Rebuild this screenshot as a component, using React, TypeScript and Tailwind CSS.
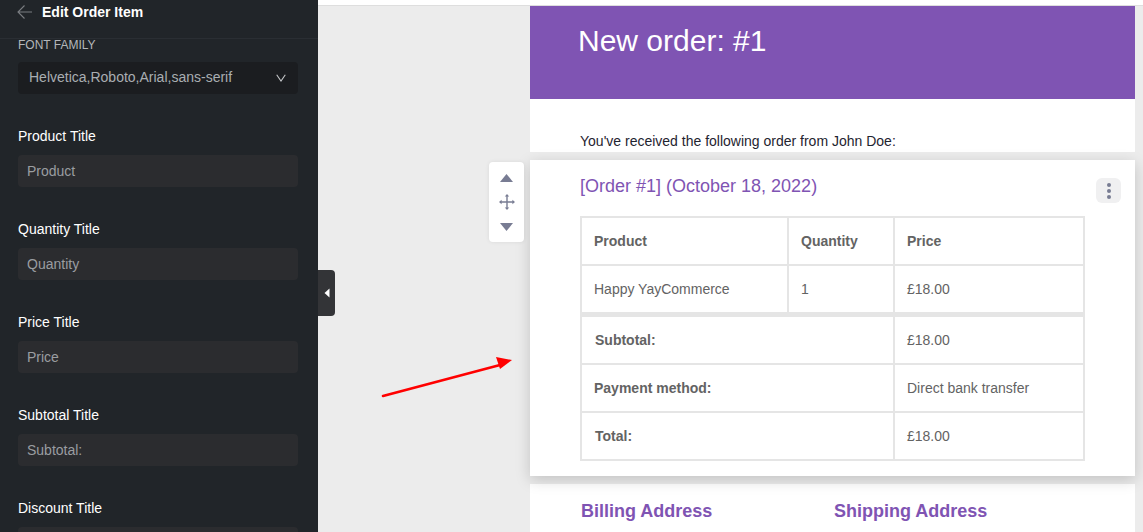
const fields = [
  { label: "Product Title", value: "Product" },
  { label: "Quantity Title", value: "Quantity" },
  { label: "Price Title", value: "Price" },
  { label: "Subtotal Title", value: "Subtotal:" },
  { label: "Discount Title", value: "" },
];

function Sidebar() {
  return (
    <aside className="h-full w-[318px] shrink-0 overflow-hidden bg-[#212529]">
      <div className="flex h-[39px] items-start border-b border-[#2a2e33] pl-[17px] pt-[3px]">
        <svg width="16" height="14" viewBox="0 0 16 14" fill="none" stroke="#7b7e82" strokeWidth="1.1" className="mt-[2px]">
          <path d="M15 7H1M7.5 0.5 1 7l6.5 6.5" />
        </svg>
        <h1 className="ml-[9px] text-[14px] leading-[18px] font-bold text-white">Edit Order Item</h1>
      </div>
      <div className="pl-[18px] pr-[20px]">
        <div className="text-[12px] leading-[12px] text-[#b4b7ba]">FONT FAMILY</div>
        <div className="mt-[11px] flex h-[32px] items-center justify-between rounded-[4px] bg-[#1b1d20] pl-[11px] pr-[12px]">
          <span className="pb-[3px] text-[14px] leading-[26px] text-[#a9aeb2]">Helvetica,Roboto,Arial,sans-serif</span>
          <svg width="10" height="8" viewBox="0 0 10 8" fill="none" stroke="#c5c7c9" strokeWidth="1.1">
            <path d="M0.7 0.8 5 7l4.3-6.2" />
          </svg>
        </div>
        <div className="mt-[33px] flex flex-col gap-[33px]">
          {fields.map((f) => (
            <div key={f.label}>
              <label className="block text-[14px] leading-[18px] text-white">{f.label}</label>
              <div className="mt-[10px] flex h-[32px] items-center rounded-[4px] bg-[#2b2c2f] px-[9px] text-[14px] text-[#9a9da1]">
                {f.value}
              </div>
            </div>
          ))}
        </div>
      </div>
    </aside>
  );
}

function MoveControl() {
  return (
    <div className="absolute left-[171px] top-[162px] flex h-[80px] w-[35px] flex-col items-center rounded-[4px] bg-white shadow-[0_0_4px_rgba(0,0,0,0.08)]">
      <svg width="13" height="8" viewBox="0 0 13 8" className="mt-[12px]">
        <path d="M6.5 0 13 8H0Z" fill="#787c93" />
      </svg>
      <svg width="16" height="16" viewBox="0 0 16 16" className="mt-[12px]" fill="#787c93">
        <path d="M7.3 2h1.4v12H7.3zM2 7.3h12v1.4H2z" />
        <path d="M8 0 10.2 2.6H5.8ZM8 16 10.2 13.4H5.8ZM0 8 2.6 5.8V10.2ZM16 8 13.4 5.8V10.2Z" />
      </svg>
      <svg width="13" height="8" viewBox="0 0 13 8" className="mt-[13px]">
        <path d="M6.5 8 13 0H0Z" fill="#787c93" />
      </svg>
    </div>
  );
}

function Cell({ className, children }: { className: string; children: React.ReactNode }) {
  return <div className={`flex items-center px-[12px] ${className}`}>{children}</div>;
}

function OrderTable() {
  return (
    <div className="ml-[50px] mt-[20px] w-[505px] text-[14px] text-[#636363]">
      <div className="border-2 border-[#e5e5e5]">
        <div className="flex h-[48px] border-b-2 border-[#e5e5e5] font-bold">
          <Cell className="w-[205px]">Product</Cell>
          <Cell className="w-[106px] border-l-2 border-[#e5e5e5]">Quantity</Cell>
          <Cell className="flex-1 border-l-2 border-[#e5e5e5]">Price</Cell>
        </div>
        <div className="flex h-[46px]">
          <Cell className="w-[205px]">Happy YayCommerce</Cell>
          <Cell className="w-[106px] border-l-2 border-[#e5e5e5]">1</Cell>
          <Cell className="flex-1 border-l-2 border-[#e5e5e5]">£18.00</Cell>
        </div>
      </div>
      <div className="border-x-2 border-b-2 border-t-[3px] border-[#e5e5e5]">
        {[
          ["Subtotal:", "£18.00"],
          ["Payment method:", "Direct bank transfer"],
          ["Total:", "£18.00"],
        ].map(([k, v], i) => (
          <div key={k} className={`flex ${i === 0 ? "h-[46px]" : "h-[48px] border-t-2 border-[#e5e5e5]"}`}>
            <Cell className="w-[311px] font-bold">
              <span className={i === 1 ? "" : "ml-[1px]"}>{k}</span>
            </Cell>
            <Cell className="flex-1 border-l-2 border-[#e5e5e5]">{v}</Cell>
          </div>
        ))}
      </div>
    </div>
  );
}

function EmailColumn() {
  return (
    <div className="ml-[212px] flex w-[605px] flex-col">
      <div className="h-[93px] bg-[#7f54b3] pl-[48px] pt-[17px]">
        <h2 className="text-[30px] leading-[36px] text-white">New order: #1</h2>
      </div>
      <div className="h-[53px] bg-white pl-[50px] pt-[33px] text-[14px] leading-[18px] text-[#1f2430]">
        You've received the following order from John Doe:
      </div>
      <div className="relative mt-[8px] h-[316px] bg-white pt-[16px] shadow-[0_4px_14px_rgba(0,0,0,0.18)]">
        <div className="pl-[50px] text-[18px] leading-[20px] text-[#7f54b3]">[Order #1] (October 18, 2022)</div>
        <OrderTable />
        <button className="absolute left-[566px] top-[18px] flex h-[25px] w-[25px] flex-col items-center justify-center gap-[2px] rounded-[6px] bg-[#f0f0f1]">
          <span className="h-[4px] w-[4px] rounded-full bg-[#787c93]" />
          <span className="h-[4px] w-[4px] rounded-full bg-[#787c93]" />
          <span className="h-[4px] w-[4px] rounded-full bg-[#787c93]" />
        </button>
      </div>
      <div className="mt-[8px] flex h-[60px] bg-white pl-[51px] pt-[16px] text-[18px] leading-[22px] font-bold text-[#7f54b3]">
        <span className="w-[253px]">Billing Address</span>
        <span>Shipping Address</span>
      </div>
    </div>
  );
}

export default function App() {
  return (
    <div className="flex h-[532px] w-[1143px] overflow-hidden bg-[#ececec] font-['Liberation_Sans',Arial,sans-serif]">
      <Sidebar />
      <main className="relative flex-1 overflow-hidden">
        <div className="h-[6px] border-b border-[#dedede] bg-white" />
        <EmailColumn />
        <MoveControl />
        <button className="absolute left-0 top-[270px] flex h-[46px] w-[17px] items-center justify-center rounded-r-[4px] bg-[#333437]">
          <svg width="6" height="10" viewBox="0 0 6 10">
            <path d="M5.5 0.5V9.5L0.5 5Z" fill="#fff" />
          </svg>
        </button>
        <svg className="absolute left-[60px] top-[355px]" width="140" height="46" viewBox="0 0 140 46">
          <path d="M5 41 122 10" stroke="#ff0000" strokeWidth="2.6" strokeLinecap="round" />
          <path d="M134 5 118 2 122 14Z" fill="#ff0000" />
        </svg>
      </main>
    </div>
  );
}
